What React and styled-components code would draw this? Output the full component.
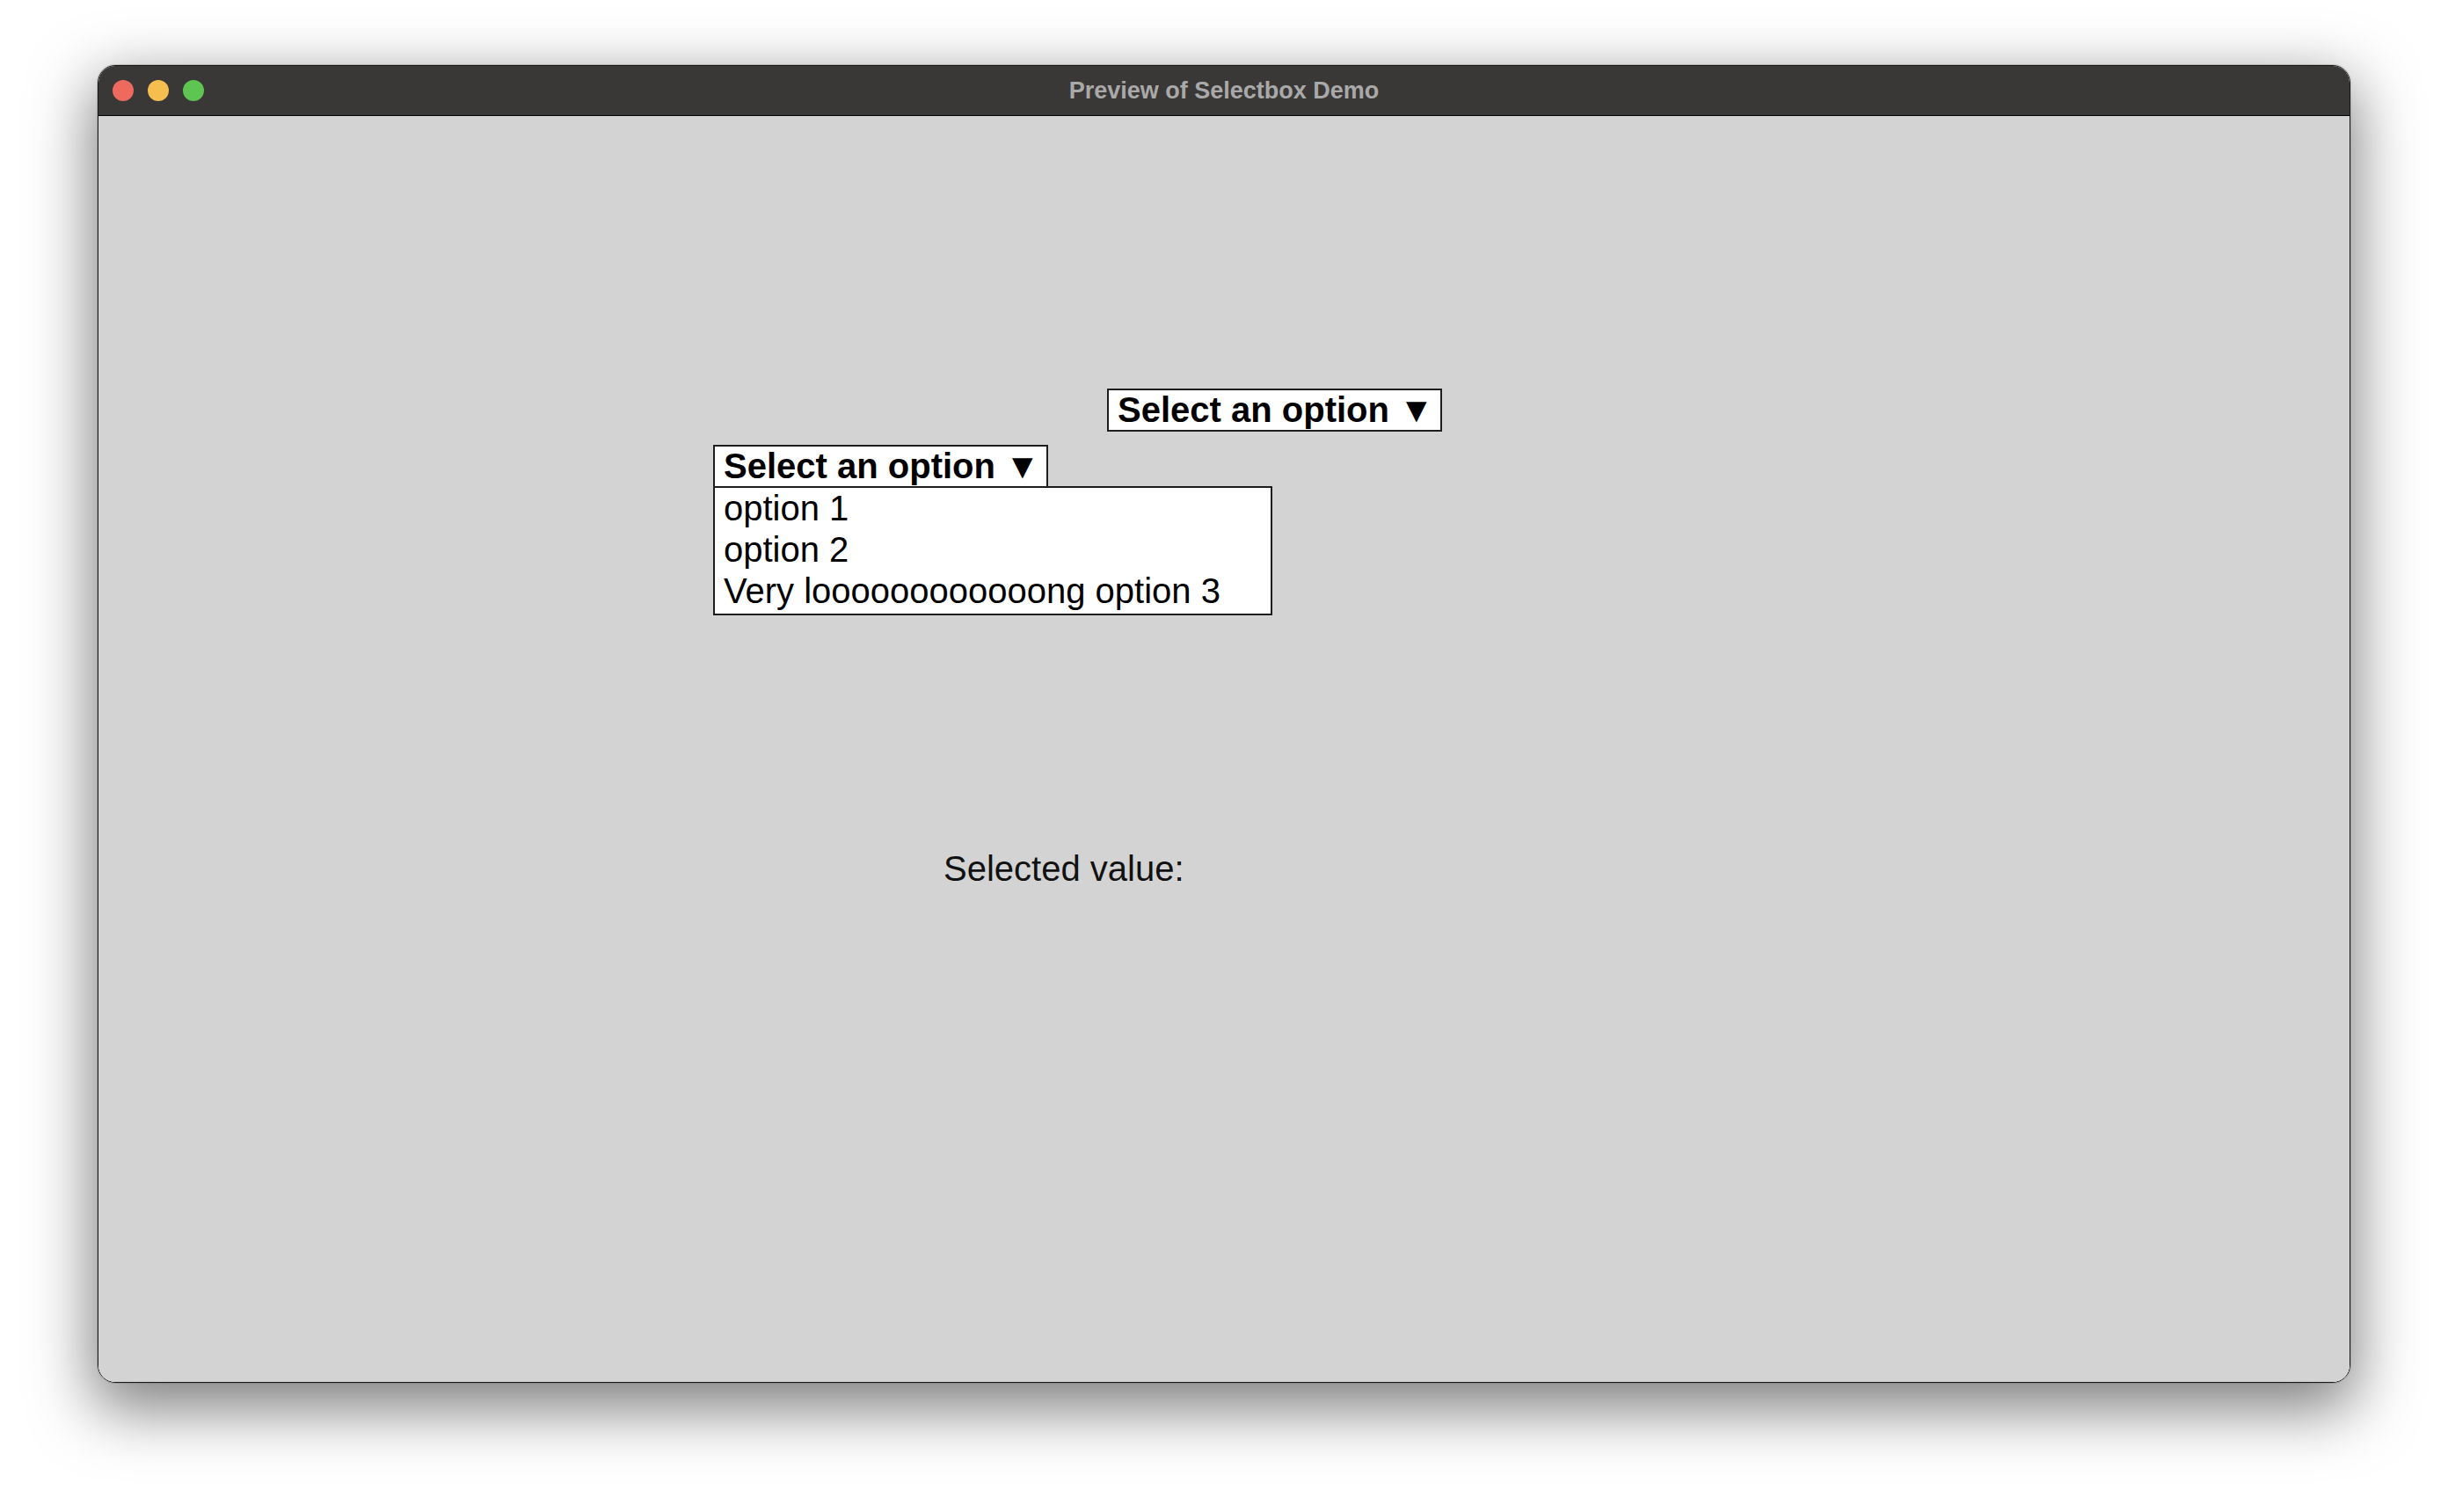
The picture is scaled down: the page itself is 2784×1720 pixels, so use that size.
import React from "react";
import styled, { createGlobalStyle } from "styled-components";

const Global = createGlobalStyle`
  html, body {
    margin: 0;
    padding: 0;
    background: #ffffff;
  }
  body {
    font-family: "Liberation Sans", Arial, sans-serif;
  }
`;

const Page = styled.div`
  width: 2784px;
  height: 1720px;
  display: flex;
  justify-content: center;
  align-items: flex-start;
  padding-top: 74px;
  box-sizing: border-box;
  background: #ffffff;
  overflow: hidden;
`;

const Window = styled.div`
  width: 2562px;
  border: 1px solid #1a1a1a;
  border-radius: 20px;
  overflow: hidden;
  box-sizing: border-box;
  display: flex;
  flex-direction: column;
  box-shadow: 0 24px 70px 6px rgba(0, 0, 0, 0.5), 0 0 0 1px rgba(0, 0, 0, 0.15);
`;

const TitleBar = styled.div`
  position: relative;
  height: 56px;
  background: #3a3836;
  border-bottom: 1px solid #050505;
  display: flex;
  align-items: center;
  justify-content: center;
`;

const Lights = styled.div`
  position: absolute;
  left: 16px;
  top: 0;
  bottom: 0;
  display: flex;
  align-items: center;
  gap: 16px;
`;

const Light = styled.span`
  width: 24px;
  height: 24px;
  border-radius: 50%;
  background: ${(p) => p.$color};
  display: block;
`;

const Title = styled.div`
  font-family: "Liberation Sans", Arial, sans-serif;
  font-weight: 700;
  font-size: 27px;
  color: #a9a9a9;
`;

const Content = styled.div`
  height: 1440px;
  background: #d3d3d3;
  display: flex;
  flex-direction: column;
  align-items: flex-start;
  padding-top: 310px;
  box-sizing: border-box;
  font-family: "Liberation Sans", Arial, sans-serif;
  color: #000;
`;

const SelectWrap = styled.div`
  position: relative;
  margin-left: ${(p) => p.$left}px;
  margin-top: ${(p) => p.$top || 0}px;
`;

const SelectButton = styled.div`
  display: inline-block;
  background: #ffffff;
  border: 2px solid #1e1e1e;
  padding: 0 7px 0 10px;
  font-size: 40px;
  font-weight: 700;
  line-height: 45px;
  white-space: nowrap;
  color: #000;
`;

const List = styled.div`
  position: absolute;
  left: 0;
  top: calc(100% - 2px);
  width: 636px;
  box-sizing: border-box;
  background: #ffffff;
  border: 2px solid #1e1e1e;
  display: flex;
  flex-direction: column;
  padding-bottom: 2px;
`;

const Option = styled.div`
  font-size: 40px;
  line-height: 47px;
  padding: 0 10px;
  white-space: nowrap;
  color: #000;
`;

const SelectedValue = styled.div`
  margin-left: 961px;
  margin-top: 410px;
  font-size: 40px;
  line-height: 46px;
  color: #111;
`;

function Selectbox({ left, top, open, options }) {
  return (
    <SelectWrap $left={left} $top={top}>
      <SelectButton>Select an option ▼</SelectButton>
      {open && (
        <List>
          {options.map((o) => (
            <Option key={o}>{o}</Option>
          ))}
        </List>
      )}
    </SelectWrap>
  );
}

const OPTIONS = ["option 1", "option 2", "Very loooooooooooong option 3"];

export default function App() {
  return (
    <>
      <Global />
      <Page>
        <Window>
          <TitleBar>
            <Lights>
              <Light $color="#ee6a5f" />
              <Light $color="#f5bf4f" />
              <Light $color="#5ec552" />
            </Lights>
            <Title>Preview of Selectbox Demo</Title>
          </TitleBar>
          <Content>
            <Selectbox left={1147} options={OPTIONS} />
            <Selectbox left={699} top={15} open options={OPTIONS} />
            <SelectedValue>Selected value:</SelectedValue>
          </Content>
        </Window>
      </Page>
    </>
  );
}
